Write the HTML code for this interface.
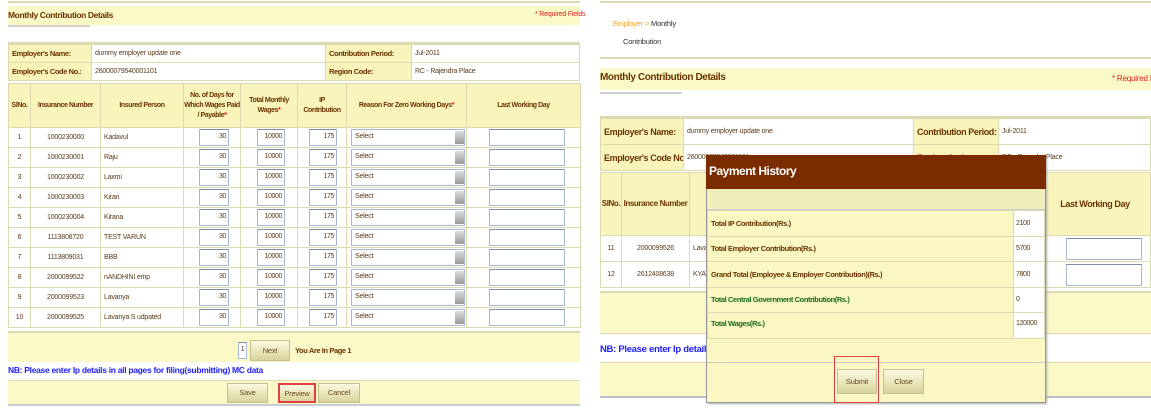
<!DOCTYPE html>
<html><head><meta charset="utf-8"><style>
*{margin:0;padding:0;box-sizing:border-box}
body{width:1151px;height:419px;background:#fff;position:relative;overflow:hidden;font-family:"Liberation Sans Narrow","Liberation Sans",sans-serif;font-size:7.5px;letter-spacing:-0.2px;color:#5a3a1a}
.a{position:absolute;white-space:nowrap}
.band{background:#fbf9c8}
.ttl{font-weight:bold;color:#6b3300;font-size:8.5px;letter-spacing:-0.4px}
.req{color:#e02020;font-size:7px}
.ln{height:2px;background:#dcdab0}
table{border-collapse:collapse;position:absolute;table-layout:fixed}
td{border:1px solid #dcdab0;padding:0 3px;white-space:nowrap;overflow:hidden;font-size:7px;color:#5a3a1a}
td.l{background:#f8f4bc;font-weight:bold;color:#6b3300;font-size:7.5px;letter-spacing:-0.4px}
td.v{background:#fff}
th{background:#f8f4bc;border:1px solid #dcdab0;font-weight:bold;color:#6b3300;font-size:7px;line-height:10px;letter-spacing:-0.4px}
.in{display:inline-block;height:17px;border:1px solid #a8b8d0;border-top-color:#7d8ea8;background:#fff;vertical-align:middle;text-align:right;padding:3px 2px 0 0;font-size:7px;letter-spacing:-0.4px}
.sel{display:inline-block;height:17px;border:1px solid #a8b8d0;background:#fff;vertical-align:middle;position:relative;padding:3px 3px;font-size:7px}
.sel:after{content:"";position:absolute;right:0;top:1px;width:9px;height:13px;background:linear-gradient(#ddd,#999)}
.btn{position:absolute;background:linear-gradient(#fbfae0,#d8d39c);border:1px solid #c6c190;text-align:center;color:#6b4a20;font-size:7.5px;line-height:18px}
.nb{color:#2020ff;font-weight:bold;font-size:8.5px;letter-spacing:-0.3px}
.mr td{height:25.5px;background:#faf7c2;font-weight:bold;font-size:7.5px;color:#6b3300;letter-spacing:-0.4px}
.mr td.val{background:#fff;font-weight:normal;color:#5a3a1a;padding:0 2px;font-size:7px}
.mr td.g{color:#1a6b1a}
</style></head><body>

<!-- LEFT -->
<div class="a ln" style="left:8px;top:1px;width:572px"></div>
<div class="a band" style="left:8px;top:6px;width:572px;height:19px"></div>
<div class="a ttl" style="left:8px;top:10px">Monthly Contribution Details</div>
<div class="a req" style="left:535px;top:11px">* Required Fields</div>
<div class="a" style="left:8px;top:25px;width:82px;height:2px;background:#cfcfcf"></div>
<div class="a ln" style="left:8px;top:42px;width:572px"></div>
<table style="left:8px;top:44px;width:572px">
<colgroup><col style="width:83px"><col style="width:234px"><col style="width:86px"><col></colgroup>
<tr style="height:18px"><td class="l">Employer's Name:</td><td class="v">dummy employer update one</td><td class="l">Contribution Period:</td><td class="v">Jul-2011</td></tr>
<tr style="height:18px"><td class="l">Employer's Code No.:</td><td class="v">26000079540001101</td><td class="l">Region Code:</td><td class="v">RC - Rajendra Place</td></tr>
</table>
<table style="left:8px;top:83px;width:572px">
<colgroup><col style="width:22px"><col style="width:70px"><col style="width:83px"><col style="width:57px"><col style="width:57px"><col style="width:49px"><col style="width:120px"><col style="width:114px"></colgroup>
<tr style="height:44px"><th>SlNo.</th><th>Insurance Number</th><th>Insured Person</th><th>No. of Days for Which Wages Paid / Payable<span style="color:red">*</span></th><th>Total Monthly Wages<span style="color:red">*</span></th><th>IP<br>Contribution</th><th>Reason For Zero Working Days<span style="color:red">*</span></th><th>Last Working Day</th></tr>
<tr style="height:20px"><td style="text-align:center">1</td><td style="text-align:center">1000230000</td><td>Kadavul</td><td style="text-align:right;padding-right:11px"><span class="in" style="width:30px">30</span></td><td style="text-align:right;padding-right:12px"><span class="in" style="width:28px">10000</span></td><td style="text-align:right;padding-right:9px"><span class="in" style="width:28px">175</span></td><td style="padding-left:4px"><span class="sel" style="width:114px">Select</span></td><td style="padding-left:22px"><span class="in" style="width:76px"></span></td></tr>
<tr style="height:20px"><td style="text-align:center">2</td><td style="text-align:center">1000230001</td><td>Raju</td><td style="text-align:right;padding-right:11px"><span class="in" style="width:30px">30</span></td><td style="text-align:right;padding-right:12px"><span class="in" style="width:28px">10000</span></td><td style="text-align:right;padding-right:9px"><span class="in" style="width:28px">175</span></td><td style="padding-left:4px"><span class="sel" style="width:114px">Select</span></td><td style="padding-left:22px"><span class="in" style="width:76px"></span></td></tr>
<tr style="height:20px"><td style="text-align:center">3</td><td style="text-align:center">1000230002</td><td>Laxmi</td><td style="text-align:right;padding-right:11px"><span class="in" style="width:30px">30</span></td><td style="text-align:right;padding-right:12px"><span class="in" style="width:28px">10000</span></td><td style="text-align:right;padding-right:9px"><span class="in" style="width:28px">175</span></td><td style="padding-left:4px"><span class="sel" style="width:114px">Select</span></td><td style="padding-left:22px"><span class="in" style="width:76px"></span></td></tr>
<tr style="height:20px"><td style="text-align:center">4</td><td style="text-align:center">1000230003</td><td>Kiran</td><td style="text-align:right;padding-right:11px"><span class="in" style="width:30px">30</span></td><td style="text-align:right;padding-right:12px"><span class="in" style="width:28px">10000</span></td><td style="text-align:right;padding-right:9px"><span class="in" style="width:28px">175</span></td><td style="padding-left:4px"><span class="sel" style="width:114px">Select</span></td><td style="padding-left:22px"><span class="in" style="width:76px"></span></td></tr>
<tr style="height:20px"><td style="text-align:center">5</td><td style="text-align:center">1000230004</td><td>Kirana</td><td style="text-align:right;padding-right:11px"><span class="in" style="width:30px">30</span></td><td style="text-align:right;padding-right:12px"><span class="in" style="width:28px">10000</span></td><td style="text-align:right;padding-right:9px"><span class="in" style="width:28px">175</span></td><td style="padding-left:4px"><span class="sel" style="width:114px">Select</span></td><td style="padding-left:22px"><span class="in" style="width:76px"></span></td></tr>
<tr style="height:20px"><td style="text-align:center">6</td><td style="text-align:center">1113808720</td><td>TEST VARUN</td><td style="text-align:right;padding-right:11px"><span class="in" style="width:30px">30</span></td><td style="text-align:right;padding-right:12px"><span class="in" style="width:28px">10000</span></td><td style="text-align:right;padding-right:9px"><span class="in" style="width:28px">175</span></td><td style="padding-left:4px"><span class="sel" style="width:114px">Select</span></td><td style="padding-left:22px"><span class="in" style="width:76px"></span></td></tr>
<tr style="height:20px"><td style="text-align:center">7</td><td style="text-align:center">1113809031</td><td>BBB</td><td style="text-align:right;padding-right:11px"><span class="in" style="width:30px">30</span></td><td style="text-align:right;padding-right:12px"><span class="in" style="width:28px">10000</span></td><td style="text-align:right;padding-right:9px"><span class="in" style="width:28px">175</span></td><td style="padding-left:4px"><span class="sel" style="width:114px">Select</span></td><td style="padding-left:22px"><span class="in" style="width:76px"></span></td></tr>
<tr style="height:20px"><td style="text-align:center">8</td><td style="text-align:center">2000099522</td><td>nANDHINI emp</td><td style="text-align:right;padding-right:11px"><span class="in" style="width:30px">30</span></td><td style="text-align:right;padding-right:12px"><span class="in" style="width:28px">10000</span></td><td style="text-align:right;padding-right:9px"><span class="in" style="width:28px">175</span></td><td style="padding-left:4px"><span class="sel" style="width:114px">Select</span></td><td style="padding-left:22px"><span class="in" style="width:76px"></span></td></tr>
<tr style="height:20px"><td style="text-align:center">9</td><td style="text-align:center">2000099523</td><td>Lavanya</td><td style="text-align:right;padding-right:11px"><span class="in" style="width:30px">30</span></td><td style="text-align:right;padding-right:12px"><span class="in" style="width:28px">10000</span></td><td style="text-align:right;padding-right:9px"><span class="in" style="width:28px">175</span></td><td style="padding-left:4px"><span class="sel" style="width:114px">Select</span></td><td style="padding-left:22px"><span class="in" style="width:76px"></span></td></tr>
<tr style="height:20px"><td style="text-align:center">10</td><td style="text-align:center">2000099525</td><td>Lavanya S udpated</td><td style="text-align:right;padding-right:11px"><span class="in" style="width:30px">30</span></td><td style="text-align:right;padding-right:12px"><span class="in" style="width:28px">10000</span></td><td style="text-align:right;padding-right:9px"><span class="in" style="width:28px">175</span></td><td style="padding-left:4px"><span class="sel" style="width:114px">Select</span></td><td style="padding-left:22px"><span class="in" style="width:76px"></span></td></tr>
</table>
<div class="a band" style="left:8px;top:331px;width:572px;height:31px;border-top:2px solid #dcdab0"></div>
<div class="a in" style="left:238px;top:342px;width:9px;height:17px;text-align:center;padding:3px 0 0">1</div>
<div class="btn" style="left:250px;top:340px;width:40px;height:21px;line-height:20px">Next</div>
<div class="a ttl" style="left:295px;top:346px;font-size:7.5px">You Are In Page 1</div>
<div class="a nb" style="left:8px;top:365px">NB: Please enter Ip details in all pages for filing(submitting) MC data</div>
<div class="a band" style="left:8px;top:380px;width:572px;height:24px;border-top:1px solid #dcdab0"></div>
<div class="btn" style="left:227px;top:383px;width:41px;height:20px">Save</div>
<div class="btn" style="left:278px;top:383px;width:38px;height:20px;border:2px solid #e04040">Preview</div>
<div class="btn" style="left:318px;top:383px;width:42px;height:20px">Cancel</div>
<div class="a" style="left:8px;top:404px;width:572px;height:2px;background:#c8ccd4"></div>

<!-- RIGHT -->
<div class="a ln" style="left:600px;top:1px;width:551px"></div>
<div class="a" style="left:613px;top:19px;font-size:7.5px;color:#f0a020">Employer &gt; <span style="color:#333">Monthly</span></div>
<div class="a" style="left:623px;top:37px;font-size:7.5px;color:#333">Contribution</div>
<div class="a ln" style="left:600px;top:57px;width:551px"></div>
<div class="a band" style="left:600px;top:68px;width:551px;height:22px"></div>
<div class="a ttl" style="left:600px;top:72px;font-size:10px">Monthly Contribution Details</div>
<div class="a req" style="left:1112px;top:74px;font-size:8px">* Required Fields</div>
<div class="a" style="left:600px;top:92px;width:82px;height:2px;background:#cfcfcf"></div>
<div class="a ln" style="left:600px;top:116px;width:551px"></div>
<table style="left:600px;top:118px;width:551px">
<colgroup><col style="width:83px"><col style="width:230px"><col style="width:85px"><col></colgroup>
<tr style="height:26px"><td class="l" style="font-size:9px">Employer's Name:</td><td class="v">dummy employer update one</td><td class="l" style="font-size:9px">Contribution Period:</td><td class="v">Jul-2011</td></tr>
<tr style="height:26px"><td class="l" style="font-size:9px">Employer's Code No.:</td><td class="v">26000079540001101</td><td class="l" style="font-size:9px">Region Code:</td><td class="v">RC - Rajendra Place</td></tr>
</table>
<table style="left:600px;top:172px;width:551px">
<colgroup><col style="width:21px"><col style="width:68px"><col style="width:90px"><col style="width:260px"><col></colgroup>
<tr style="height:63px"><th style="font-size:8px">SlNo.</th><th style="font-size:8px;white-space:nowrap">Insurance Number</th><th></th><th></th><th style="font-size:9px">Last Working Day</th></tr>
<tr style="height:26px"><td style="text-align:center">11</td><td style="text-align:center">2000099526</td><td>Lavanya</td><td></td><td style="padding-left:26px"><span class="in" style="width:76px;height:22px"></span></td></tr>
<tr style="height:26px"><td style="text-align:center">12</td><td style="text-align:center">2612408638</td><td>KYAT</td><td></td><td style="padding-left:26px"><span class="in" style="width:76px;height:22px"></span></td></tr>
</table>
<div class="a band" style="left:600px;top:291px;width:551px;height:43px;border-top:2px solid #dcdab0;border-bottom:1px solid #dcdab0"></div>
<div class="a nb" style="left:600px;top:344px;font-size:9.5px">NB: Please enter Ip details in all pages for filing(submitting) MC data</div>
<div class="a band" style="left:600px;top:362px;width:551px;height:35px;border-top:1px solid #dcdab0"></div>
<div class="a" style="left:600px;top:396px;width:551px;height:2px;background:#b8bcc8"></div>

<!-- MODAL -->
<div class="a" style="left:706px;top:155px;width:340px;height:248px;background:#faf7c2;border:1px solid #999;box-shadow:1px 1px 2px #aaa"></div>
<div class="a" style="left:706px;top:155px;width:340px;height:34px;background:#7b2b00;color:#fff;font-weight:bold;font-size:12px;letter-spacing:-0.5px;padding:9px 3px">Payment History</div>
<div class="a" style="left:707px;top:189px;width:338px;height:21px;background:#f0edbc;border-bottom:1px solid #ccc"></div>
<table class="mr" style="left:707px;top:210px;width:338px">
<colgroup><col><col style="width:31px"></colgroup>
<tr><td>Total IP Contribution(Rs.)</td><td class="val">2100</td></tr>
<tr><td>Total Employer Contribution(Rs.)</td><td class="val">5700</td></tr>
<tr><td>Grand Total (Employee &amp; Employer Contribution)(Rs.)</td><td class="val">7800</td></tr>
<tr><td class="g">Total Central Government Contribution(Rs.)</td><td class="val">0</td></tr>
<tr><td class="g" style="vertical-align:top;padding-top:6px">Total Wages(Rs.)</td><td class="val" style="vertical-align:top;padding-top:7px">120000</td></tr>
</table>
<div class="a" style="left:707px;top:362px;width:338px;height:1px;background:#ccc"></div>
<div class="a" style="left:834px;top:356px;width:45px;height:47px;border:1px solid #e04040"></div>
<div class="btn" style="left:837px;top:369px;width:40px;height:25px;line-height:24px">Submit</div>
<div class="btn" style="left:883px;top:369px;width:41px;height:25px;line-height:24px">Close</div>
</body></html>
